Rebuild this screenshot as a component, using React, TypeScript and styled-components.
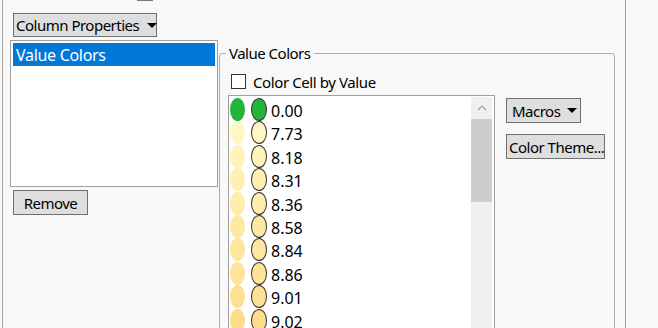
import React from "react";
import styled, { createGlobalStyle } from "styled-components";

const GlobalStyle = createGlobalStyle`
  html, body {
    margin: 0;
    padding: 0;
    background: #f8f8f8;
    overflow: hidden;
  }
  body {
    font-family: "Noto Sans", "Open Sans", sans-serif;
    color: #000;
  }
`;

const values: { v: string; c: string }[] = [
  { v: "0.00", c: "#22b53a" },
  { v: "7.73", c: "#fff6c3" },
  { v: "8.18", c: "#fff3b9" },
  { v: "8.31", c: "#fff0b2" },
  { v: "8.36", c: "#feedab" },
  { v: "8.58", c: "#fee9a4" },
  { v: "8.84", c: "#fee69e" },
  { v: "8.86", c: "#fee399" },
  { v: "9.01", c: "#fde093" },
  { v: "9.02", c: "#fddc8b" },
];

const Frame = styled.div`
  margin-left: 2px;
  width: 622px;
  height: 328px;
  border-left: 1px solid #a0a0a0;
  border-right: 1px solid #a0a0a0;
  display: flex;
  overflow: hidden;
`;

const LeftColumn = styled.div`
  width: 216px;
  box-sizing: border-box;
  padding-left: 7px;
  display: flex;
  flex-direction: column;
  align-items: flex-start;
  flex-shrink: 0;
`;

const ClippedCheck = styled.div`
  margin-left: 127px;
  width: 16px;
  height: 1px;
  background: #7a7a7a;
`;

const Button = styled.button<{ $w: number; $h?: number }>`
  box-sizing: border-box;
  width: ${(p) => p.$w}px;
  height: ${(p) => p.$h ?? 25}px;
  margin: 0;
  padding: 0 0 0 5px;
  background: #dedede;
  border: 1px solid #707070;
  border-radius: 0;
  font-family: "Noto Sans", "Open Sans", sans-serif;
  font-size: 15px;
  letter-spacing: -0.5px;
  color: #000;
  display: flex;
  align-items: center;
  gap: 7px;
  white-space: nowrap;
`;

const ColumnButton = styled(Button)`
  margin: 12px 0 0 3px;
  padding-left: 2px;
  gap: 8px;
`;

const RemoveButton = styled(Button)`
  margin: 3px 0 0 3px;
  justify-content: center;
  padding: 0;
`;

const ThemeButton = styled(Button)`
  padding-left: 2px;
`;

const Caret = styled.span`
  width: 0;
  height: 0;
  border-left: 5px solid transparent;
  border-right: 5px solid transparent;
  border-top: 5px solid #000;
`;

const PropList = styled.div`
  margin-top: 3px;
  width: 208px;
  height: 147px;
  box-sizing: border-box;
  border: 1px solid #a0a0a0;
  background: #fff;
  padding: 2px;
`;

const PropItem = styled.div<{ $selected?: boolean }>`
  height: 23px;
  line-height: 25px;
  padding-left: 3px;
  font-size: 16px;
  letter-spacing: -0.3px;
  background: ${(p) => (p.$selected ? "#0078d7" : "transparent")};
  color: ${(p) => (p.$selected ? "#fff" : "#000")};
`;

const Group = styled.div`
  position: relative;
  margin-top: 53px;
  width: 396px;
  height: 300px;
  box-sizing: border-box;
  border: 1px solid #adadad;
  border-radius: 3px;
  padding: 20px 0 0 8px;
  display: flex;
  flex-shrink: 0;
`;

const Legend = styled.span`
  position: absolute;
  top: -11px;
  left: 6px;
  padding: 0 3px;
  background: #f8f8f8;
  font-size: 15px;
  letter-spacing: -0.5px;
  line-height: 20px;
`;

const GroupMain = styled.div`
  display: flex;
  flex-direction: column;
`;

const CheckRow = styled.label`
  display: flex;
  align-items: center;
  height: 15px;
  padding-left: 3px;
  font-size: 15px;
  letter-spacing: -0.4px;
`;

const CheckBox = styled.span`
  width: 15px;
  height: 15px;
  box-sizing: border-box;
  border: 1px solid #333;
  background: #fff;
  margin-right: 7px;
`;

const ValueList = styled.div`
  margin-top: 6px;
  width: 267px;
  height: 260px;
  box-sizing: border-box;
  border: 1px solid #a0a0a0;
  background: #fff;
  display: flex;
`;

const Rows = styled.div`
  flex: 1;
  padding: 2px 0 0 1px;
`;

const Row = styled.div`
  height: 23.4px;
  display: flex;
  align-items: flex-start;
`;

const Swatch = styled.span<{ $c: string }>`
  width: 15px;
  height: 23px;
  border-radius: 50%;
  background: ${(p) => p.$c};
  flex-shrink: 0;
`;

const OutlinedSwatch = styled(Swatch)`
  width: 16px;
  box-sizing: border-box;
  border: 1px solid #333;
  margin-left: 6px;
`;

const Value = styled.span`
  margin-left: 4px;
  padding-top: 2px;
  font-size: 16px;
  line-height: 23px;
`;

const Scrollbar = styled.div`
  width: 21px;
  margin: 1px 2px 0 0;
  background: #f0f0f0;
  display: flex;
  flex-direction: column;
`;

const ScrollArrow = styled.div`
  height: 22px;
  display: flex;
  align-items: center;
  justify-content: center;
`;

const Thumb = styled.div`
  height: 83px;
  background: #cdcdcd;
`;

const SideButtons = styled.div`
  margin: 24px 0 0 11px;
  display: flex;
  flex-direction: column;
  gap: 11px;
`;

export default function App() {
  return (
    <>
      <GlobalStyle />
      <Frame>
        <LeftColumn>
          <ClippedCheck />
          <ColumnButton $w={144} $h={24}>
            Column Properties <Caret />
          </ColumnButton>
          <PropList>
            <PropItem $selected>Value Colors</PropItem>
          </PropList>
          <RemoveButton $w={75}>Remove</RemoveButton>
        </LeftColumn>
        <Group>
          <Legend>Value Colors</Legend>
          <GroupMain>
            <CheckRow>
              <CheckBox />
              Color Cell by Value
            </CheckRow>
            <ValueList>
              <Rows>
                {values.map((r) => (
                  <Row key={r.v}>
                    <Swatch $c={r.c} />
                    <OutlinedSwatch $c={r.c} />
                    <Value>{r.v}</Value>
                  </Row>
                ))}
              </Rows>
              <Scrollbar>
                <ScrollArrow>
                  <svg width="10" height="6" viewBox="0 0 10 6">
                    <path d="M1 5 L5 1 L9 5" fill="none" stroke="#a0a0a0" strokeWidth="1.2" />
                  </svg>
                </ScrollArrow>
                <Thumb />
              </Scrollbar>
            </ValueList>
          </GroupMain>
          <SideButtons>
            <Button $w={75}>
              Macros <Caret />
            </Button>
            <ThemeButton $w={99}>Color Theme...</ThemeButton>
          </SideButtons>
        </Group>
      </Frame>
    </>
  );
}
